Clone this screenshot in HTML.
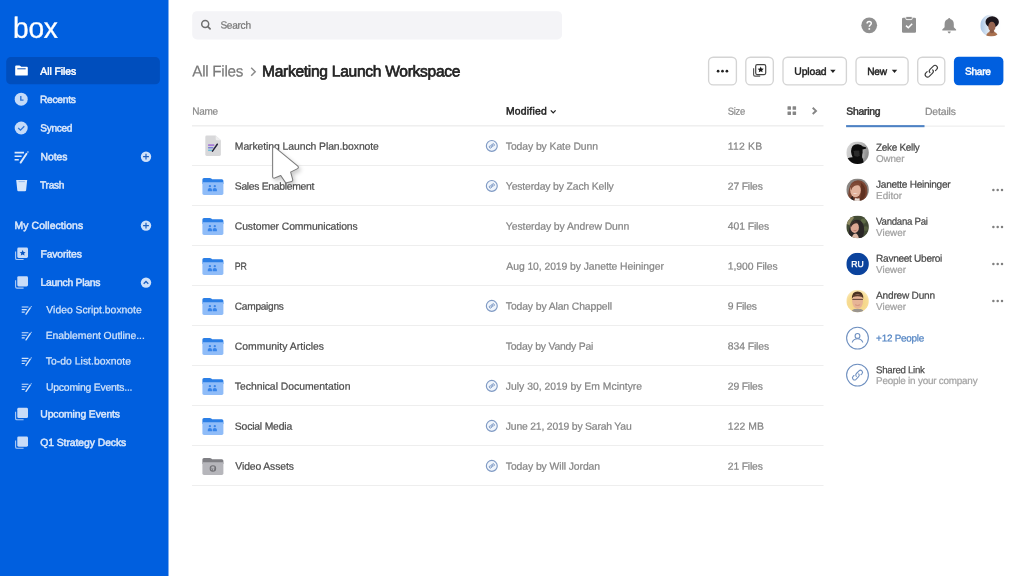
<!DOCTYPE html>
<html lang="en">
<head>
<meta charset="utf-8">
<title>Marketing Launch Workspace - Box</title>
<style>
*{box-sizing:border-box;margin:0;padding:0}
html,body{width:1024px;height:576px;overflow:hidden;background:#fff}
body{font-family:"Liberation Sans",Arial,sans-serif;position:relative;color:#4b4b4b;text-rendering:geometricPrecision}
#txt{position:absolute;left:0;top:0;width:1024px;height:576px;will-change:transform}
.t{position:absolute;white-space:nowrap;line-height:14px;transform-origin:0 50%}
.b{position:absolute}
svg{position:absolute;overflow:visible}
#gfx{left:0;top:0}
.av{width:23px;height:23px;border-radius:50%;overflow:hidden}
</style>
</head>
<body>
<svg id="gfx" width="1024" height="576" viewBox="0 0 1024 576">
<svg width="1024" height="576" viewBox="0 0 1024 576"><rect x="0" y="0" width="168.5" height="576" fill="#005fdf"/><rect x="6.2" y="57.1" width="153.7" height="27.2" rx="4.6" fill="#004ebd"/><rect x="192.2" y="11.2" width="369.8" height="28.2" rx="4.6" fill="#f4f4f7"/><rect x="708.6" y="57.2" width="27.8" height="27.7" rx="4.6" fill="#fff" stroke="#d4d4d4" stroke-width="1.35"/><rect x="745.8" y="57.2" width="27.5" height="27.7" rx="4.6" fill="#fff" stroke="#d4d4d4" stroke-width="1.35"/><rect x="783.0" y="57.2" width="63.4" height="27.7" rx="4.6" fill="#fff" stroke="#d4d4d4" stroke-width="1.35"/><rect x="856.0" y="57.2" width="52.1" height="27.7" rx="4.6" fill="#fff" stroke="#d4d4d4" stroke-width="1.35"/><rect x="917.7" y="57.2" width="27.1" height="27.7" rx="4.6" fill="#fff" stroke="#d4d4d4" stroke-width="1.35"/><rect x="953.9" y="56.7" width="49.5" height="28.6" rx="4.8" fill="#005fdf"/><rect x="192" y="125.3" width="631.5" height="1.1" fill="#e9e9e9"/><rect x="192" y="164.95" width="631.5" height="1.1" fill="#eeeeee"/><rect x="192" y="204.95" width="631.5" height="1.1" fill="#eeeeee"/><rect x="192" y="244.95" width="631.5" height="1.1" fill="#eeeeee"/><rect x="192" y="284.95" width="631.5" height="1.1" fill="#eeeeee"/><rect x="192" y="324.95" width="631.5" height="1.1" fill="#eeeeee"/><rect x="192" y="364.95" width="631.5" height="1.1" fill="#eeeeee"/><rect x="192" y="404.95" width="631.5" height="1.1" fill="#eeeeee"/><rect x="192" y="444.95" width="631.5" height="1.1" fill="#eeeeee"/><rect x="192" y="484.95" width="631.5" height="1.1" fill="#eeeeee"/><rect x="846" y="125.5" width="158.8" height="1.3" fill="#efefef"/><rect x="846.1" y="125.1" width="78.4" height="2.1" fill="#4e82c4"/></svg>
<svg x="15" y="65.6" overflow="visible" width="13" height="10" viewBox="0 0 13 10.3"><path d="M1 0 H4.4 Q5 0 5.4 .4 L6.2 1.2 H12 Q13 1.2 13 2.2 V9.3 Q13 10.3 12 10.3 H1 Q0 10.3 0 9.3 V1 Q0 0 1 0Z" fill="#fff"/><path d="M2.2 3.3 H10.8" stroke="#004ebd" stroke-width="1"/></svg>
<svg x="14.7" y="92.7" overflow="visible" width="13" height="13" viewBox="0 0 13 13"><circle cx="6.5" cy="6.5" r="6.5" fill="#c4dbf9"/><path d="M6.1 3.4 V7.4 H8.8" fill="none" stroke="#2f76d8" stroke-width="1.4"/></svg>
<svg x="14.7" y="121.5" overflow="visible" width="13" height="13" viewBox="0 0 13 13"><circle cx="6.5" cy="6.5" r="6.5" fill="#c4dbf9"/><path d="M3.5 6.6 L5.8 8.7 L9.6 4.8" fill="none" stroke="#2f76d8" stroke-width="1.3"/></svg>
<svg x="14.2" y="151.2" overflow="visible" width="15.0" height="12.0" viewBox="0 0 15 12"><path d="M.4 1.4 H9.8 M.4 5 H7.4 M.4 8.6 H4.6" stroke="#dce9fb" stroke-width="1.6" fill="none"/><path d="M6.4 11.4 L12.3 2.6" stroke="#dce9fb" stroke-width="1.9" stroke-linecap="round"/><circle cx="13.7" cy="0.8" r=".8" fill="#dce9fb"/></svg>
<svg x="16.2" y="180" overflow="visible" width="11" height="11.2" viewBox="0 0 11 11.2"><path d="M0 0 H11 L9.9 10.2 Q9.8 11.2 8.8 11.2 H2.2 Q1.2 11.2 1.1 10.2Z" fill="#d6e6fb"/><path d="M2.4 1.6 H8.6" stroke="#8db6ee" stroke-width=".9"/></svg>
<svg x="140.8" y="151.5" overflow="visible" width="10.4" height="10.4" viewBox="0 0 10.4 10.4"><circle cx="5.2" cy="5.2" r="5.2" fill="#cfe1fa"/><path d="M5.2 2.3 V8.1 M2.3 5.2 H8.1" stroke="#1c5fc0" stroke-width="1.2"/></svg>
<svg x="140.8" y="220.4" overflow="visible" width="10.4" height="10.4" viewBox="0 0 10.4 10.4"><circle cx="5.2" cy="5.2" r="5.2" fill="#cfe1fa"/><path d="M5.2 2.3 V8.1 M2.3 5.2 H8.1" stroke="#1c5fc0" stroke-width="1.2"/></svg>
<svg x="140.8" y="277.4" overflow="visible" width="10.4" height="10.4" viewBox="0 0 10.4 10.4"><circle cx="5.2" cy="5.2" r="5.2" fill="#cfe1fa"/><path d="M2.9 6.4 L5.2 4.1 L7.5 6.4" fill="none" stroke="#1c5fc0" stroke-width="1.3"/></svg>
<svg x="15.0" y="247.6" overflow="visible" width="13" height="12.5" viewBox="0 0 13 12.5"><path d="M.6 4 V10.6 Q.6 11.9 1.9 11.9 H8.6" fill="none" stroke="#c9dcf8" stroke-width="1.1" opacity=".85"/><rect x="2.3" y="0" width="10.7" height="10.3" rx="1.4" fill="#c9dcf8"/><path d="M7.65 2.4 L8.55 4.3 L10.6 4.55 L9.1 5.95 L9.5 8 L7.65 7 L5.8 8 L6.2 5.95 L4.7 4.55 L6.75 4.3Z" fill="#0a57c2"/></svg>
<svg x="15.0" y="276.2" overflow="visible" width="13" height="12.5" viewBox="0 0 13 12.5"><path d="M.6 4 V10.6 Q.6 11.9 1.9 11.9 H8.6" fill="none" stroke="#c9dcf8" stroke-width="1.1" opacity=".85"/><rect x="2.3" y="0" width="10.7" height="10.3" rx="1.4" fill="#c9dcf8"/></svg>
<svg x="21.4" y="306.0" overflow="visible" width="10.8" height="8.6" viewBox="0 0 15 12"><path d="M.4 1.4 H9.8 M.4 5 H7.4 M.4 8.6 H4.6" stroke="#d3e4fa" stroke-width="1.6" fill="none"/><path d="M6.4 11.4 L12.3 2.6" stroke="#d3e4fa" stroke-width="1.9" stroke-linecap="round"/><circle cx="13.7" cy="0.8" r=".8" fill="#d3e4fa"/></svg>
<svg x="21.4" y="331.7" overflow="visible" width="10.8" height="8.6" viewBox="0 0 15 12"><path d="M.4 1.4 H9.8 M.4 5 H7.4 M.4 8.6 H4.6" stroke="#d3e4fa" stroke-width="1.6" fill="none"/><path d="M6.4 11.4 L12.3 2.6" stroke="#d3e4fa" stroke-width="1.9" stroke-linecap="round"/><circle cx="13.7" cy="0.8" r=".8" fill="#d3e4fa"/></svg>
<svg x="21.4" y="357.3" overflow="visible" width="10.8" height="8.6" viewBox="0 0 15 12"><path d="M.4 1.4 H9.8 M.4 5 H7.4 M.4 8.6 H4.6" stroke="#d3e4fa" stroke-width="1.6" fill="none"/><path d="M6.4 11.4 L12.3 2.6" stroke="#d3e4fa" stroke-width="1.9" stroke-linecap="round"/><circle cx="13.7" cy="0.8" r=".8" fill="#d3e4fa"/></svg>
<svg x="21.4" y="383.2" overflow="visible" width="10.8" height="8.6" viewBox="0 0 15 12"><path d="M.4 1.4 H9.8 M.4 5 H7.4 M.4 8.6 H4.6" stroke="#d3e4fa" stroke-width="1.6" fill="none"/><path d="M6.4 11.4 L12.3 2.6" stroke="#d3e4fa" stroke-width="1.9" stroke-linecap="round"/><circle cx="13.7" cy="0.8" r=".8" fill="#d3e4fa"/></svg>
<svg x="15.0" y="407.8" overflow="visible" width="13" height="12.5" viewBox="0 0 13 12.5"><path d="M.6 4 V10.6 Q.6 11.9 1.9 11.9 H8.6" fill="none" stroke="#c9dcf8" stroke-width="1.1" opacity=".85"/><rect x="2.3" y="0" width="10.7" height="10.3" rx="1.4" fill="#c9dcf8"/></svg>
<svg x="15.0" y="436.4" overflow="visible" width="13" height="12.5" viewBox="0 0 13 12.5"><path d="M.6 4 V10.6 Q.6 11.9 1.9 11.9 H8.6" fill="none" stroke="#c9dcf8" stroke-width="1.1" opacity=".85"/><rect x="2.3" y="0" width="10.7" height="10.3" rx="1.4" fill="#c9dcf8"/></svg>
<svg x="200.8" y="19.6" overflow="visible" width="11" height="11" viewBox="0 0 11 11"><circle cx="4.4" cy="4.4" r="3.5" fill="none" stroke="#6f6f6f" stroke-width="1.5"/><path d="M7 7 L9.3 9.3" stroke="#6f6f6f" stroke-width="1.7" stroke-linecap="round"/></svg>
<svg x="861.2" y="17.3" overflow="visible" width="16" height="16" viewBox="0 0 16 16"><circle cx="8" cy="8" r="7.9" fill="#909090"/><path d="M5.9 6.3 Q5.9 4.2 8 4.2 Q10.1 4.2 10.1 6 Q10.1 7.1 9 7.8 Q8.1 8.4 8.1 9.4" fill="none" stroke="#fff" stroke-width="1.5"/><circle cx="8.1" cy="11.6" r=".95" fill="#fff"/></svg>
<svg x="902" y="16.4" overflow="visible" width="14" height="16.4" viewBox="0 0 14 16.4"><path d="M1.2 1.4 H12.8 Q14 1.4 14 2.6 V15.2 Q14 16.4 12.8 16.4 H1.2 Q0 16.4 0 15.2 V2.6 Q0 1.4 1.2 1.4Z" fill="#909090"/><rect x="3.8" y="0" width="6.4" height="3.2" rx="1" fill="#909090" stroke="#fff" stroke-width=".9"/><path d="M4 9.2 L6.3 11.4 L10.2 7.4" fill="none" stroke="#fff" stroke-width="1.5"/></svg>
<svg x="942" y="18" overflow="visible" width="14.4" height="15.6" viewBox="0 0 14.4 15.6"><path d="M7.2 0 Q8.2 0 8.3 1.1 Q11.8 2 11.8 6.2 V9.2 L14.1 11.6 Q14.6 12.6 13.6 12.6 H.8 Q-.2 12.6 .3 11.6 L2.6 9.2 V6.2 Q2.6 2 6.1 1.1 Q6.2 0 7.2 0Z" fill="#909090"/><path d="M5.6 13.6 H8.8 Q8.6 15.4 7.2 15.4 Q5.8 15.4 5.6 13.6Z" fill="#909090"/></svg>
<svg x="980.3" y="14.6" overflow="visible" width="21.8" height="21.8" viewBox="0 0 21.8 21.8"><defs><clipPath id="ca0"><circle cx="10.9" cy="10.9" r="10.9"/></clipPath><filter id="avb" x="-20%" y="-20%" width="140%" height="140%"><feGaussianBlur stdDeviation=".55"/></filter><linearGradient id="ga0" x1="0" x2="1" y1="0" y2="0"><stop offset="0" stop-color="#a9c6e6"/><stop offset=".3" stop-color="#d6e3f1"/><stop offset=".62" stop-color="#fbfbfc"/><stop offset="1" stop-color="#fff"/></linearGradient></defs><g clip-path="url(#ca0)"><rect width="21.8" height="21.8" fill="url(#ga0)"/><g filter="url(#avb)"><ellipse cx="11.9" cy="7.4" rx="6.7" ry="5.7" fill="#1d151c"/><path d="M5.6 21.8 Q6.6 17 11.6 17 Q16.6 17 17.8 21.8Z" fill="#a9714f"/><ellipse cx="11.6" cy="12" rx="3.6" ry="4.9" fill="#95644f"/><ellipse cx="11.6" cy="16.6" rx="2.2" ry="2" fill="#8a5a44"/></g></g></svg>
<svg x="250" y="66.9" overflow="visible" width="6.4" height="9.6" viewBox="0 0 6.4 9.6"><path d="M1.2 .8 L5.2 4.8 L1.2 8.8" fill="none" stroke="#8a8a8a" stroke-width="1.5"/></svg>
<svg x="714.5" y="67.2" overflow="visible" width="16" height="8" viewBox="0 0 16 8"><circle cx="3.5999999999999996" cy="4" r="1.35" fill="#222"/><circle cx="8" cy="4" r="1.35" fill="#222"/><circle cx="12.4" cy="4" r="1.35" fill="#222"/></svg>
<svg x="753" y="64.1" overflow="visible" width="13.4" height="13" viewBox="0 0 13.4 13"><path d="M.6 4.2 V10.6 Q.6 12 2 12 H7.2" fill="none" stroke="#555" stroke-width="1.15"/><rect x="2.7" y=".6" width="10" height="9.9" rx="1.5" fill="#fff" stroke="#444" stroke-width="1.2"/><path d="M7.7 2.5 L8.6 4.4 L10.7 4.65 L9.2 6.05 L9.6 8.1 L7.7 7.1 L5.8 8.1 L6.2 6.05 L4.7 4.65 L6.8 4.4Z" fill="#1c1c1c"/></svg>
<svg x="830.2" y="69.8" overflow="visible" width="5.4" height="3.2" viewBox="0 0 5.4 3.2"><path d="M0 0 H5.4 L2.7 3.2Z" fill="#222"/></svg>
<svg x="891.8" y="69.8" overflow="visible" width="5.4" height="3.2" viewBox="0 0 5.4 3.2"><path d="M0 0 H5.4 L2.7 3.2Z" fill="#222"/></svg>
<svg x="922.5" y="62.4" overflow="visible" width="17.6" height="17.6" viewBox="0 0 14 14"><g fill="none" stroke="#3a3a3a" stroke-width=".9" stroke-linecap="round"><path d="M5.9 8.1 Q4.7 6.8 6 5.5 L8.6 2.9 Q10 1.6 11.3 2.9 Q12.6 4.2 11.3 5.6 L10.3 6.6"/><path d="M8.1 5.9 Q9.3 7.2 8 8.5 L5.4 11.1 Q4 12.4 2.7 11.1 Q1.4 9.8 2.7 8.4 L3.7 7.4"/></g></svg>
<svg x="550.2" y="109.6" overflow="visible" width="6" height="4.4" viewBox="0 0 6 4.4"><path d="M.6 .8 L3 3.3 L5.4 .8" fill="none" stroke="#222" stroke-width="1.3"/></svg>
<svg x="787.5" y="106.3" overflow="visible" width="8.6" height="8.6" viewBox="0 0 8.6 8.6"><g fill="#868686"><rect x="0" y="0" width="3.5" height="3.5" rx=".4"/><rect x="5.1" y="0" width="3.5" height="3.5" rx=".4"/><rect x="0" y="5.1" width="3.5" height="3.5" rx=".4"/><rect x="5.1" y="5.1" width="3.5" height="3.5" rx=".4"/></g></svg>
<svg x="811.6" y="106.9" overflow="visible" width="5.6" height="8" viewBox="0 0 5.6 8"><path d="M1.1 .9 L4.4 4 L1.1 7.1" fill="none" stroke="#858585" stroke-width="1.9"/></svg>
<svg x="205.3" y="135.6" overflow="visible" width="15.6" height="20.4" viewBox="0 0 15.6 20.4"><path d="M1.4 0 H10.4 L15.6 4.6 V19 Q15.6 20.4 14.2 20.4 H1.4 Q0 20.4 0 19 V1.4 Q0 0 1.4 0Z" fill="#d8d8da"/><path d="M10.4 0 L15.6 4.6 H11.6 Q10.4 4.6 10.4 3.4Z" fill="#eeeeef"/><path d="M2.8 9.5 H9" stroke="#a06dd6" stroke-width="1.5"/><path d="M2.8 12.1 H8" stroke="#7a80d8" stroke-width="1.5"/><path d="M2.8 14.7 H6.7" stroke="#69bfdc" stroke-width="1.5"/><path d="M7.2 15.5 L12 8.6" stroke="#23233a" stroke-width="1.5" stroke-linecap="round"/></svg>
<svg x="485.7" y="139.8" overflow="visible" width="12.2" height="12.2" viewBox="0 0 12.2 12.2"><circle cx="6.1" cy="6.1" r="5.45" fill="#f0f5fc" stroke="#7f9ac4" stroke-width="1.15"/><g fill="none" stroke="#6f8dbd" stroke-width=".95" stroke-linecap="round"><path d="M5.5 7 Q4.8 6.2 5.6 5.4 L6.7 4.3 Q7.5 3.5 8.3 4.3 Q9.1 5.1 8.3 5.9 L7.9 6.3"/><path d="M6.7 5.2 Q7.4 6 6.6 6.8 L5.5 7.9 Q4.7 8.7 3.9 7.9 Q3.1 7.1 3.9 6.3 L4.3 5.9"/></g></svg>
<svg x="202.4" y="177.9" overflow="visible" width="21" height="17" viewBox="0 0 21 17"><path d="M1.6 0 H7.4 Q8.3 0 8.9 .6 L9.7 1.3 H19.4 Q21 1.3 21 2.9 V6 H0 V1.6 Q0 0 1.6 0Z" fill="#2b7fe6"/><path d="M0 4.3 H21 V15.4 Q21 17 19.4 17 H1.6 Q0 17 0 15.4Z" fill="#8fbcf8"/><circle cx="7.5" cy="8.3" r="1.15" fill="#3684ea"/><path d="M5.4 13.4 V11.9 Q5.4 10.2 7.5 10.2 Q9.6 10.2 9.6 11.9 V13.4Z" fill="#3684ea"/><circle cx="12.4" cy="8.3" r="1.15" fill="#3684ea"/><path d="M10.3 13.4 V11.9 Q10.3 10.2 12.4 10.2 Q14.5 10.2 14.5 11.9 V13.4Z" fill="#3684ea"/></svg>
<svg x="485.7" y="179.8" overflow="visible" width="12.2" height="12.2" viewBox="0 0 12.2 12.2"><circle cx="6.1" cy="6.1" r="5.45" fill="#f0f5fc" stroke="#7f9ac4" stroke-width="1.15"/><g fill="none" stroke="#6f8dbd" stroke-width=".95" stroke-linecap="round"><path d="M5.5 7 Q4.8 6.2 5.6 5.4 L6.7 4.3 Q7.5 3.5 8.3 4.3 Q9.1 5.1 8.3 5.9 L7.9 6.3"/><path d="M6.7 5.2 Q7.4 6 6.6 6.8 L5.5 7.9 Q4.7 8.7 3.9 7.9 Q3.1 7.1 3.9 6.3 L4.3 5.9"/></g></svg>
<svg x="202.4" y="217.9" overflow="visible" width="21" height="17" viewBox="0 0 21 17"><path d="M1.6 0 H7.4 Q8.3 0 8.9 .6 L9.7 1.3 H19.4 Q21 1.3 21 2.9 V6 H0 V1.6 Q0 0 1.6 0Z" fill="#2b7fe6"/><path d="M0 4.3 H21 V15.4 Q21 17 19.4 17 H1.6 Q0 17 0 15.4Z" fill="#8fbcf8"/><circle cx="7.5" cy="8.3" r="1.15" fill="#3684ea"/><path d="M5.4 13.4 V11.9 Q5.4 10.2 7.5 10.2 Q9.6 10.2 9.6 11.9 V13.4Z" fill="#3684ea"/><circle cx="12.4" cy="8.3" r="1.15" fill="#3684ea"/><path d="M10.3 13.4 V11.9 Q10.3 10.2 12.4 10.2 Q14.5 10.2 14.5 11.9 V13.4Z" fill="#3684ea"/></svg>
<svg x="202.4" y="257.9" overflow="visible" width="21" height="17" viewBox="0 0 21 17"><path d="M1.6 0 H7.4 Q8.3 0 8.9 .6 L9.7 1.3 H19.4 Q21 1.3 21 2.9 V6 H0 V1.6 Q0 0 1.6 0Z" fill="#2b7fe6"/><path d="M0 4.3 H21 V15.4 Q21 17 19.4 17 H1.6 Q0 17 0 15.4Z" fill="#8fbcf8"/><circle cx="7.5" cy="8.3" r="1.15" fill="#3684ea"/><path d="M5.4 13.4 V11.9 Q5.4 10.2 7.5 10.2 Q9.6 10.2 9.6 11.9 V13.4Z" fill="#3684ea"/><circle cx="12.4" cy="8.3" r="1.15" fill="#3684ea"/><path d="M10.3 13.4 V11.9 Q10.3 10.2 12.4 10.2 Q14.5 10.2 14.5 11.9 V13.4Z" fill="#3684ea"/></svg>
<svg x="202.4" y="297.9" overflow="visible" width="21" height="17" viewBox="0 0 21 17"><path d="M1.6 0 H7.4 Q8.3 0 8.9 .6 L9.7 1.3 H19.4 Q21 1.3 21 2.9 V6 H0 V1.6 Q0 0 1.6 0Z" fill="#2b7fe6"/><path d="M0 4.3 H21 V15.4 Q21 17 19.4 17 H1.6 Q0 17 0 15.4Z" fill="#8fbcf8"/><circle cx="7.5" cy="8.3" r="1.15" fill="#3684ea"/><path d="M5.4 13.4 V11.9 Q5.4 10.2 7.5 10.2 Q9.6 10.2 9.6 11.9 V13.4Z" fill="#3684ea"/><circle cx="12.4" cy="8.3" r="1.15" fill="#3684ea"/><path d="M10.3 13.4 V11.9 Q10.3 10.2 12.4 10.2 Q14.5 10.2 14.5 11.9 V13.4Z" fill="#3684ea"/></svg>
<svg x="485.7" y="299.8" overflow="visible" width="12.2" height="12.2" viewBox="0 0 12.2 12.2"><circle cx="6.1" cy="6.1" r="5.45" fill="#f0f5fc" stroke="#7f9ac4" stroke-width="1.15"/><g fill="none" stroke="#6f8dbd" stroke-width=".95" stroke-linecap="round"><path d="M5.5 7 Q4.8 6.2 5.6 5.4 L6.7 4.3 Q7.5 3.5 8.3 4.3 Q9.1 5.1 8.3 5.9 L7.9 6.3"/><path d="M6.7 5.2 Q7.4 6 6.6 6.8 L5.5 7.9 Q4.7 8.7 3.9 7.9 Q3.1 7.1 3.9 6.3 L4.3 5.9"/></g></svg>
<svg x="202.4" y="337.9" overflow="visible" width="21" height="17" viewBox="0 0 21 17"><path d="M1.6 0 H7.4 Q8.3 0 8.9 .6 L9.7 1.3 H19.4 Q21 1.3 21 2.9 V6 H0 V1.6 Q0 0 1.6 0Z" fill="#2b7fe6"/><path d="M0 4.3 H21 V15.4 Q21 17 19.4 17 H1.6 Q0 17 0 15.4Z" fill="#8fbcf8"/><circle cx="7.5" cy="8.3" r="1.15" fill="#3684ea"/><path d="M5.4 13.4 V11.9 Q5.4 10.2 7.5 10.2 Q9.6 10.2 9.6 11.9 V13.4Z" fill="#3684ea"/><circle cx="12.4" cy="8.3" r="1.15" fill="#3684ea"/><path d="M10.3 13.4 V11.9 Q10.3 10.2 12.4 10.2 Q14.5 10.2 14.5 11.9 V13.4Z" fill="#3684ea"/></svg>
<svg x="202.4" y="377.9" overflow="visible" width="21" height="17" viewBox="0 0 21 17"><path d="M1.6 0 H7.4 Q8.3 0 8.9 .6 L9.7 1.3 H19.4 Q21 1.3 21 2.9 V6 H0 V1.6 Q0 0 1.6 0Z" fill="#2b7fe6"/><path d="M0 4.3 H21 V15.4 Q21 17 19.4 17 H1.6 Q0 17 0 15.4Z" fill="#8fbcf8"/><circle cx="7.5" cy="8.3" r="1.15" fill="#3684ea"/><path d="M5.4 13.4 V11.9 Q5.4 10.2 7.5 10.2 Q9.6 10.2 9.6 11.9 V13.4Z" fill="#3684ea"/><circle cx="12.4" cy="8.3" r="1.15" fill="#3684ea"/><path d="M10.3 13.4 V11.9 Q10.3 10.2 12.4 10.2 Q14.5 10.2 14.5 11.9 V13.4Z" fill="#3684ea"/></svg>
<svg x="485.7" y="379.8" overflow="visible" width="12.2" height="12.2" viewBox="0 0 12.2 12.2"><circle cx="6.1" cy="6.1" r="5.45" fill="#f0f5fc" stroke="#7f9ac4" stroke-width="1.15"/><g fill="none" stroke="#6f8dbd" stroke-width=".95" stroke-linecap="round"><path d="M5.5 7 Q4.8 6.2 5.6 5.4 L6.7 4.3 Q7.5 3.5 8.3 4.3 Q9.1 5.1 8.3 5.9 L7.9 6.3"/><path d="M6.7 5.2 Q7.4 6 6.6 6.8 L5.5 7.9 Q4.7 8.7 3.9 7.9 Q3.1 7.1 3.9 6.3 L4.3 5.9"/></g></svg>
<svg x="202.4" y="417.9" overflow="visible" width="21" height="17" viewBox="0 0 21 17"><path d="M1.6 0 H7.4 Q8.3 0 8.9 .6 L9.7 1.3 H19.4 Q21 1.3 21 2.9 V6 H0 V1.6 Q0 0 1.6 0Z" fill="#2b7fe6"/><path d="M0 4.3 H21 V15.4 Q21 17 19.4 17 H1.6 Q0 17 0 15.4Z" fill="#8fbcf8"/><circle cx="7.5" cy="8.3" r="1.15" fill="#3684ea"/><path d="M5.4 13.4 V11.9 Q5.4 10.2 7.5 10.2 Q9.6 10.2 9.6 11.9 V13.4Z" fill="#3684ea"/><circle cx="12.4" cy="8.3" r="1.15" fill="#3684ea"/><path d="M10.3 13.4 V11.9 Q10.3 10.2 12.4 10.2 Q14.5 10.2 14.5 11.9 V13.4Z" fill="#3684ea"/></svg>
<svg x="485.7" y="419.8" overflow="visible" width="12.2" height="12.2" viewBox="0 0 12.2 12.2"><circle cx="6.1" cy="6.1" r="5.45" fill="#f0f5fc" stroke="#7f9ac4" stroke-width="1.15"/><g fill="none" stroke="#6f8dbd" stroke-width=".95" stroke-linecap="round"><path d="M5.5 7 Q4.8 6.2 5.6 5.4 L6.7 4.3 Q7.5 3.5 8.3 4.3 Q9.1 5.1 8.3 5.9 L7.9 6.3"/><path d="M6.7 5.2 Q7.4 6 6.6 6.8 L5.5 7.9 Q4.7 8.7 3.9 7.9 Q3.1 7.1 3.9 6.3 L4.3 5.9"/></g></svg>
<svg x="202.4" y="457.9" overflow="visible" width="21" height="17" viewBox="0 0 21 17"><path d="M1.6 0 H7.4 Q8.3 0 8.9 .6 L9.7 1.3 H19.4 Q21 1.3 21 2.9 V6 H0 V1.6 Q0 0 1.6 0Z" fill="#7f7f84"/><path d="M0 4.3 H21 V15.4 Q21 17 19.4 17 H1.6 Q0 17 0 15.4Z" fill="#b6b6bb"/><circle cx="10.5" cy="10.6" r="2.7" fill="none" stroke="#6f6f74" stroke-width="1.1"/><path d="M8.6 9.6 Q10.5 10.6 10 13 M12.4 9.4 Q11.2 11 12.6 12.2" fill="none" stroke="#6f6f74" stroke-width=".9"/></svg>
<svg x="485.7" y="459.8" overflow="visible" width="12.2" height="12.2" viewBox="0 0 12.2 12.2"><circle cx="6.1" cy="6.1" r="5.45" fill="#f0f5fc" stroke="#7f9ac4" stroke-width="1.15"/><g fill="none" stroke="#6f8dbd" stroke-width=".95" stroke-linecap="round"><path d="M5.5 7 Q4.8 6.2 5.6 5.4 L6.7 4.3 Q7.5 3.5 8.3 4.3 Q9.1 5.1 8.3 5.9 L7.9 6.3"/><path d="M6.7 5.2 Q7.4 6 6.6 6.8 L5.5 7.9 Q4.7 8.7 3.9 7.9 Q3.1 7.1 3.9 6.3 L4.3 5.9"/></g></svg>
<svg x="846.3" y="141.4" overflow="visible" width="22.6" height="22.6" viewBox="0 0 22.6 22.6"><defs><clipPath id="ca1"><circle cx="11.3" cy="11.3" r="11.3"/></clipPath><linearGradient id="gz" x1="0" x2="1" y1="0" y2=".4"><stop offset="0" stop-color="#d9d9d9"/><stop offset=".5" stop-color="#c4c4c4"/><stop offset="1" stop-color="#8e8e8e"/></linearGradient></defs><g clip-path="url(#ca1)"><rect width="22.6" height="22.6" fill="url(#gz)"/><g filter="url(#avb)"><path d="M0 22.6 V17.6 Q3 15.6 6.4 15.8 Q4 11 5.2 7 Q6.6 2.6 11.6 2.8 Q15 3 16.6 5.2 L19.6 5.8 Q20.6 6.8 19.4 7.4 L16.2 8 Q17 11 16 13.4 Q15.4 15.6 16.6 17.4 L17.6 22.6Z" fill="#0b0b0b"/><path d="M16.4 9 Q18.6 12 18.2 16 L16.4 17 Q15.6 15.4 16.2 13.4 Q16.8 11 16.4 9Z" fill="#a8a8a8"/><path d="M7.4 9.6 Q10 8.6 13 9.4 L13.4 14.6 Q10.6 16 8 14.4Z" fill="#2c2c2c"/></g></g></svg>
<svg x="846.3" y="178.5" overflow="visible" width="22.6" height="22.6" viewBox="0 0 22.6 22.6"><defs><clipPath id="ca2"><circle cx="11.3" cy="11.3" r="11.3"/></clipPath></defs><g clip-path="url(#ca2)"><rect width="22.6" height="22.6" fill="#8a8683"/><g filter="url(#avb)"><path d="M2.2 22.6 Q1 10 5.4 4.4 Q9.6 .4 15.6 2.6 Q21.6 6 21 14 Q20.6 19 17.6 22.6Z" fill="#7a4432"/><path d="M14.4 4 Q20 8 19 16 Q18 20.6 15 22.6 L13 22.6 Q16 14 14.4 4Z" fill="#5e3020"/><ellipse cx="9.2" cy="11.8" rx="5.3" ry="6.9" fill="#e3b49e"/><path d="M4.4 8.4 Q6 4 11 4.2 Q14.4 4.6 15.2 8 Q11.4 5.6 8 7.4 Q5.6 8.8 4.8 12Z" fill="#804a36"/><path d="M6.6 14.4 Q9 16.4 12 14.2 Q9.4 15.2 6.6 14.4Z" fill="#fff"/><path d="M3.4 22.6 Q4 18.4 6.4 17.4 L8 22.6Z" fill="#2f2320"/><path d="M8 22.6 L9 19.6 Q11 20.6 13 19.4 L13.6 22.6Z" fill="#e9ddd6"/></g></g></svg>
<svg x="846.3" y="215.6" overflow="visible" width="22.6" height="22.6" viewBox="0 0 22.6 22.6"><defs><clipPath id="ca3"><circle cx="11.3" cy="11.3" r="11.3"/></clipPath></defs><g clip-path="url(#ca3)"><rect width="22.6" height="22.6" fill="#434b35"/><g filter="url(#avb)"><path d="M0 3 Q3 0 8 2 Q5 5 3 10 Q1.6 8 0 9Z" fill="#8f8a63"/><circle cx="17" cy="5.4" r="2.6" fill="#5d6945"/><circle cx="19.4" cy="13" r="2.4" fill="#56603f"/><path d="M3 22.6 Q1.6 12 5.6 6.4 Q9.6 2.6 14.6 5.4 Q18.6 9 17.6 17 Q17.4 20.6 15.6 22.6Z" fill="#2b2527"/><ellipse cx="8.4" cy="11.8" rx="4.2" ry="5.6" fill="#dba793"/><path d="M4.2 9 Q5.6 5.4 9.6 5.6 Q12.4 6 13 8.6 Q10 7 7.4 8.4 Q5.4 9.4 4.6 12Z" fill="#3a2e2a"/><path d="M5.6 22.6 Q6 18.6 9 17.8 Q11.6 18 12.6 22.6Z" fill="#dcb7a4"/><path d="M6.2 14.4 Q8.4 16 11 14.2 Q8.8 15 6.2 14.4Z" fill="#a4524a"/></g></g></svg>
<svg x="846.3" y="252.7" overflow="visible" width="22.6" height="22.6" viewBox="0 0 22.6 22.6"><defs><clipPath id="ca4"><circle cx="11.3" cy="11.3" r="11.3"/></clipPath></defs><g clip-path="url(#ca4)"><rect width="22.6" height="22.6" fill="#0b439d"/></g></svg>
<svg x="846.3" y="289.8" overflow="visible" width="22.6" height="22.6" viewBox="0 0 22.6 22.6"><defs><clipPath id="ca5"><circle cx="11.3" cy="11.3" r="11.3"/></clipPath><radialGradient id="gd" cx=".5" cy=".6" r=".6"><stop offset="0" stop-color="#f3cf7c"/><stop offset=".75" stop-color="#f7dc93"/><stop offset="1" stop-color="#fbecc0"/></radialGradient></defs><g clip-path="url(#ca5)"><rect width="22.6" height="22.6" fill="url(#gd)"/><g filter="url(#avb)"><path d="M5.6 9 Q5.4 1.6 11.3 1.6 Q17.2 1.6 17 9 Q15.6 5.6 11.3 5.6 Q7 5.6 5.6 9Z" fill="#4a3324"/><ellipse cx="11.3" cy="11.8" rx="5.4" ry="7.4" fill="#e7b496"/><path d="M6 9.6 H16.6" stroke="#6a4a3c" stroke-width="1.1"/><path d="M7 5.4 Q11.3 3.8 15.6 5.4 L16 7.2 Q11.3 5.6 6.6 7.2Z" fill="#5a3d2c"/><path d="M8.8 15 Q11.3 16.4 13.8 15" stroke="#cf8d78" stroke-width=".9" fill="none"/><path d="M5 22.6 Q5.6 19.6 8 19.2 L14.6 19.2 Q17 19.6 17.6 22.6Z" fill="#9a958f"/></g></g></svg>
<svg x="989.7" y="186.0" overflow="visible" width="16" height="8" viewBox="0 0 16 8"><circle cx="3.7" cy="4" r="1.25" fill="#808080"/><circle cx="8" cy="4" r="1.25" fill="#808080"/><circle cx="12.3" cy="4" r="1.25" fill="#808080"/></svg>
<svg x="989.7" y="223.0" overflow="visible" width="16" height="8" viewBox="0 0 16 8"><circle cx="3.7" cy="4" r="1.25" fill="#808080"/><circle cx="8" cy="4" r="1.25" fill="#808080"/><circle cx="12.3" cy="4" r="1.25" fill="#808080"/></svg>
<svg x="989.7" y="260.0" overflow="visible" width="16" height="8" viewBox="0 0 16 8"><circle cx="3.7" cy="4" r="1.25" fill="#808080"/><circle cx="8" cy="4" r="1.25" fill="#808080"/><circle cx="12.3" cy="4" r="1.25" fill="#808080"/></svg>
<svg x="989.7" y="297.0" overflow="visible" width="16" height="8" viewBox="0 0 16 8"><circle cx="3.7" cy="4" r="1.25" fill="#808080"/><circle cx="8" cy="4" r="1.25" fill="#808080"/><circle cx="12.3" cy="4" r="1.25" fill="#808080"/></svg>
<svg x="846.1" y="326.7" overflow="visible" width="22.8" height="22.8" viewBox="0 0 22.8 22.8"><circle cx="11.4" cy="11.4" r="10.9" fill="#fff" stroke="#6f90c0" stroke-width="1.1"/><circle cx="11.4" cy="9.2" r="2.4" fill="none" stroke="#6f90c0" stroke-width="1.1"/><path d="M6.2 15.4 Q7.6 12 11.4 12 Q15.2 12 16.6 15.4" fill="none" stroke="#6f90c0" stroke-width="1.1" stroke-linecap="round"/></svg>
<svg x="846.1" y="363.7" overflow="visible" width="22.8" height="22.8" viewBox="0 0 22.8 22.8"><circle cx="11.4" cy="11.4" r="10.9" fill="#fff" stroke="#6f90c0" stroke-width="1.1"/><g fill="none" stroke="#6f90c0" stroke-width="1.1" stroke-linecap="round"><path d="M10.2 12.6 Q8.9 11.2 10.3 9.8 L12.9 7.2 Q14.4 5.8 15.8 7.2 Q17.2 8.6 15.8 10.1 L14.9 11"/><path d="M12.6 10.2 Q13.9 11.6 12.5 13 L9.9 15.6 Q8.4 17 7 15.6 Q5.6 14.2 7 12.7 L7.9 11.8"/></g></svg>
</svg>
<div id="txt">
<div class="t" id="t0" style="left:13px;top:11px;font-size:29.0px;color:#ffffff;letter-spacing:-0.300px;line-height:34px;-webkit-text-stroke:0.3px;transform:translate(0.10px,0.66px) rotate(.05deg) scaleX(0.9704)">box</div>
<div class="t" id="t1" style="left:40px;top:65px;font-size:10.4px;color:#ffffff;letter-spacing:-0.047px;-webkit-text-stroke:0.47px;transform:translate(0.30px,0.84px) rotate(.05deg)">All Files</div>
<div class="t" id="t2" style="left:39px;top:94px;font-size:10.4px;color:#dce9fb;letter-spacing:-0.300px;-webkit-text-stroke:0.47px;transform:translate(0.98px,0.02px) rotate(.05deg) scaleX(0.9883)">Recents</div>
<div class="t" id="t3" style="left:40px;top:122px;font-size:10.4px;color:#dce9fb;letter-spacing:-0.300px;-webkit-text-stroke:0.47px;transform:translate(0.20px,0.59px) rotate(.05deg) scaleX(0.9737)">Synced</div>
<div class="t" id="t4" style="left:40px;top:151px;font-size:10.4px;color:#dce9fb;letter-spacing:-0.039px;-webkit-text-stroke:0.47px;transform:translate(0.50px,0.24px) rotate(.05deg)">Notes</div>
<div class="t" id="t5" style="left:40px;top:179px;font-size:10.4px;color:#dce9fb;letter-spacing:-0.300px;-webkit-text-stroke:0.47px;transform:translate(0.10px,0.59px) rotate(.05deg) scaleX(0.9725)">Trash</div>
<div class="t" id="t6" style="left:14px;top:219px;font-size:10.4px;color:#dce9fb;letter-spacing:0.072px;-webkit-text-stroke:0.47px;transform:translate(0.60px,0.88px) rotate(.05deg)">My Collections</div>
<div class="t" id="t7" style="left:40px;top:248px;font-size:10.4px;color:#dce9fb;letter-spacing:-0.167px;-webkit-text-stroke:0.47px;transform:translate(0.50px,0.40px) rotate(.05deg)">Favorites</div>
<div class="t" id="t8" style="left:40px;top:276px;font-size:10.4px;color:#dce9fb;letter-spacing:-0.279px;-webkit-text-stroke:0.47px;transform:translate(0.50px,0.87px) rotate(.05deg)">Launch Plans</div>
<div class="t" id="t9" style="left:46px;top:304px;font-size:10.4px;color:#d3e4fa;letter-spacing:-0.017px;-webkit-text-stroke:0.22px;transform:translate(0.36px,0.17px) rotate(.05deg)">Video Script.boxnote</div>
<div class="t" id="t10" style="left:45px;top:329px;font-size:10.4px;color:#d3e4fa;letter-spacing:-0.035px;-webkit-text-stroke:0.22px;transform:translate(0.64px,0.97px) rotate(.05deg)">Enablement Outline...</div>
<div class="t" id="t11" style="left:45px;top:355px;font-size:10.4px;color:#d3e4fa;letter-spacing:0.016px;-webkit-text-stroke:0.22px;transform:translate(0.80px,0.56px) rotate(.05deg)">To-do List.boxnote</div>
<div class="t" id="t12" style="left:46px;top:381px;font-size:10.4px;color:#d3e4fa;letter-spacing:-0.211px;-webkit-text-stroke:0.22px;transform:translate(0.00px,0.62px) rotate(.05deg)">Upcoming Events...</div>
<div class="t" id="t13" style="left:40px;top:408px;font-size:10.4px;color:#dce9fb;letter-spacing:-0.124px;-webkit-text-stroke:0.47px;transform:translate(0.30px,0.44px) rotate(.05deg)">Upcoming Events</div>
<div class="t" id="t14" style="left:40px;top:437px;font-size:10.4px;color:#dce9fb;letter-spacing:-0.069px;-webkit-text-stroke:0.47px;transform:translate(0.20px,0.03px) rotate(.05deg)">Q1 Strategy Decks</div>
<div class="t" id="t15" style="left:220px;top:19px;font-size:10.4px;color:#767676;letter-spacing:-0.300px;-webkit-text-stroke:0.22px;transform:translate(0.40px,0.62px) rotate(.05deg) scaleX(0.9740)">Search</div>
<div class="t" id="t16" style="left:192px;top:62px;font-size:15.6px;color:#7a7a7a;letter-spacing:-0.300px;line-height:20px;-webkit-text-stroke:0.22px;transform:translate(0.30px,0.40px) rotate(.05deg) scaleX(0.9771)">All Files</div>
<div class="t" id="t17" style="left:261px;top:62px;font-size:15.6px;color:#222222;letter-spacing:-0.300px;line-height:20px;-webkit-text-stroke:0.66px;transform:translate(0.98px,0.43px) rotate(.05deg)">Marketing Launch Workspace</div>
<div class="t" id="t18" style="left:794px;top:65px;font-size:10.4px;color:#222222;letter-spacing:-0.127px;-webkit-text-stroke:0.47px;transform:translate(0.30px,0.87px) rotate(.05deg)">Upload</div>
<div class="t" id="t19" style="left:867px;top:65px;font-size:10.4px;color:#222222;letter-spacing:-0.300px;-webkit-text-stroke:0.47px;transform:translate(0.30px,0.88px) rotate(.05deg) scaleX(0.9734)">New</div>
<div class="t" id="t20" style="left:964px;top:65px;font-size:10.4px;color:#ffffff;letter-spacing:-0.300px;-webkit-text-stroke:0.47px;transform:translate(0.98px,0.87px) rotate(.05deg) scaleX(0.9799)">Share</div>
<div class="t" id="t21" style="left:192px;top:105px;font-size:10.4px;color:#8a8a8a;letter-spacing:-0.300px;-webkit-text-stroke:0.22px;transform:translate(0.20px,0.66px) rotate(.05deg) scaleX(0.9620)">Name</div>
<div class="t" id="t22" style="left:505px;top:105px;font-size:10.4px;color:#222222;letter-spacing:0.217px;-webkit-text-stroke:0.47px;transform:translate(0.90px,0.59px) rotate(.05deg)">Modified</div>
<div class="t" id="t23" style="left:727px;top:105px;font-size:10.4px;color:#8a8a8a;letter-spacing:-0.300px;-webkit-text-stroke:0.22px;transform:translate(0.80px,0.65px) rotate(.05deg) scaleX(0.9059)">Size</div>
<div class="t" id="t24" style="left:234px;top:140px;font-size:10.4px;color:#4b4b4b;letter-spacing:-0.073px;-webkit-text-stroke:0.22px;transform:translate(0.80px,0.63px) rotate(.05deg)">Marketing Launch Plan.boxnote</div>
<div class="t" id="t25" style="left:505px;top:140px;font-size:10.4px;color:#858585;letter-spacing:-0.081px;-webkit-text-stroke:0.22px;transform:translate(0.80px,0.63px) rotate(.05deg)">Today by Kate Dunn</div>
<div class="t" id="t26" style="left:727px;top:140px;font-size:10.4px;color:#858585;letter-spacing:0.190px;-webkit-text-stroke:0.22px;transform:translate(0.80px,0.63px) rotate(.05deg)">112 KB</div>
<div class="t" id="t27" style="left:234px;top:180px;font-size:10.4px;color:#4b4b4b;letter-spacing:-0.300px;-webkit-text-stroke:0.22px;transform:translate(0.80px,0.62px) rotate(.05deg) scaleX(0.9957)">Sales Enablement</div>
<div class="t" id="t28" style="left:505px;top:180px;font-size:10.4px;color:#858585;letter-spacing:-0.141px;-webkit-text-stroke:0.22px;transform:translate(0.80px,0.62px) rotate(.05deg)">Yesterday by Zach Kelly</div>
<div class="t" id="t29" style="left:727px;top:180px;font-size:10.4px;color:#858585;letter-spacing:-0.184px;-webkit-text-stroke:0.22px;transform:translate(0.80px,0.63px) rotate(.05deg)">27 Files</div>
<div class="t" id="t30" style="left:234px;top:220px;font-size:10.4px;color:#4b4b4b;letter-spacing:-0.110px;-webkit-text-stroke:0.22px;transform:translate(0.80px,0.62px) rotate(.05deg)">Customer Communications</div>
<div class="t" id="t31" style="left:505px;top:220px;font-size:10.4px;color:#858585;letter-spacing:-0.064px;-webkit-text-stroke:0.22px;transform:translate(0.80px,0.63px) rotate(.05deg)">Yesterday by Andrew Dunn</div>
<div class="t" id="t32" style="left:727px;top:220px;font-size:10.4px;color:#858585;letter-spacing:-0.096px;-webkit-text-stroke:0.22px;transform:translate(0.80px,0.62px) rotate(.05deg)">401 Files</div>
<div class="t" id="t33" style="left:234px;top:260px;font-size:10.4px;color:#4b4b4b;letter-spacing:-0.300px;-webkit-text-stroke:0.22px;transform:translate(0.80px,0.63px) rotate(.05deg) scaleX(0.8488)">PR</div>
<div class="t" id="t34" style="left:506px;top:260px;font-size:10.4px;color:#858585;letter-spacing:-0.079px;-webkit-text-stroke:0.22px;transform:translate(0.36px,0.63px) rotate(.05deg)">Aug 10, 2019 by Janette Heininger</div>
<div class="t" id="t35" style="left:727px;top:260px;font-size:10.4px;color:#858585;letter-spacing:-0.093px;-webkit-text-stroke:0.22px;transform:translate(0.80px,0.62px) rotate(.05deg)">1,900 Files</div>
<div class="t" id="t36" style="left:234px;top:300px;font-size:10.4px;color:#4b4b4b;letter-spacing:-0.300px;-webkit-text-stroke:0.22px;transform:translate(0.80px,0.63px) rotate(.05deg) scaleX(0.9788)">Campaigns</div>
<div class="t" id="t37" style="left:505px;top:300px;font-size:10.4px;color:#858585;letter-spacing:-0.115px;-webkit-text-stroke:0.22px;transform:translate(0.80px,0.62px) rotate(.05deg)">Today by Alan Chappell</div>
<div class="t" id="t38" style="left:727px;top:300px;font-size:10.4px;color:#858585;letter-spacing:-0.252px;-webkit-text-stroke:0.22px;transform:translate(0.80px,0.62px) rotate(.05deg)">9 Files</div>
<div class="t" id="t39" style="left:234px;top:340px;font-size:10.4px;color:#4b4b4b;letter-spacing:0.016px;-webkit-text-stroke:0.22px;transform:translate(0.80px,0.63px) rotate(.05deg)">Community Articles</div>
<div class="t" id="t40" style="left:505px;top:340px;font-size:10.4px;color:#858585;letter-spacing:-0.205px;-webkit-text-stroke:0.22px;transform:translate(0.80px,0.63px) rotate(.05deg)">Today by Vandy Pai</div>
<div class="t" id="t41" style="left:727px;top:340px;font-size:10.4px;color:#858585;letter-spacing:-0.096px;-webkit-text-stroke:0.22px;transform:translate(0.80px,0.62px) rotate(.05deg)">834 Files</div>
<div class="t" id="t42" style="left:234px;top:380px;font-size:10.4px;color:#4b4b4b;letter-spacing:-0.022px;-webkit-text-stroke:0.22px;transform:translate(0.80px,0.63px) rotate(.05deg)">Technical Documentation</div>
<div class="t" id="t43" style="left:505px;top:380px;font-size:10.4px;color:#858585;-webkit-text-stroke:0.22px;transform:translate(0.80px,0.63px) rotate(.05deg)">July 30, 2019 by Em Mcintyre</div>
<div class="t" id="t44" style="left:727px;top:380px;font-size:10.4px;color:#858585;letter-spacing:-0.184px;-webkit-text-stroke:0.22px;transform:translate(0.80px,0.63px) rotate(.05deg)">29 Files</div>
<div class="t" id="t45" style="left:234px;top:420px;font-size:10.4px;color:#4b4b4b;letter-spacing:-0.191px;-webkit-text-stroke:0.22px;transform:translate(0.80px,0.63px) rotate(.05deg)">Social Media</div>
<div class="t" id="t46" style="left:505px;top:420px;font-size:10.4px;color:#858585;letter-spacing:-0.195px;-webkit-text-stroke:0.22px;transform:translate(0.80px,0.63px) rotate(.05deg)">June 21, 2019 by Sarah Yau</div>
<div class="t" id="t47" style="left:727px;top:420px;font-size:10.4px;color:#858585;letter-spacing:0.078px;-webkit-text-stroke:0.22px;transform:translate(0.80px,0.63px) rotate(.05deg)">122 MB</div>
<div class="t" id="t48" style="left:235px;top:460px;font-size:10.4px;color:#4b4b4b;letter-spacing:-0.126px;-webkit-text-stroke:0.22px;transform:translate(0.36px,0.62px) rotate(.05deg)">Video Assets</div>
<div class="t" id="t49" style="left:505px;top:460px;font-size:10.4px;color:#858585;letter-spacing:-0.083px;-webkit-text-stroke:0.22px;transform:translate(0.80px,0.63px) rotate(.05deg)">Today by Will Jordan</div>
<div class="t" id="t50" style="left:727px;top:460px;font-size:10.4px;color:#858585;letter-spacing:-0.184px;-webkit-text-stroke:0.22px;transform:translate(0.80px,0.63px) rotate(.05deg)">21 Files</div>
<div class="t" id="t51" style="left:846px;top:105px;font-size:10.4px;color:#333333;letter-spacing:-0.255px;-webkit-text-stroke:0.47px;transform:translate(0.30px,0.84px) rotate(.05deg)">Sharing</div>
<div class="t" id="t52" style="left:924px;top:105px;font-size:10.4px;color:#8a8a8a;letter-spacing:-0.111px;-webkit-text-stroke:0.22px;transform:translate(0.90px,0.92px) rotate(.05deg)">Details</div>
<div class="t" id="t53" style="left:876px;top:141px;font-size:10.1px;color:#484848;letter-spacing:-0.300px;-webkit-text-stroke:0.22px;transform:translate(0.10px,0.66px) rotate(.05deg) scaleX(0.9837)">Zeke Kelly</div>
<div class="t" id="t54" style="left:876px;top:152px;font-size:9.9px;color:#a0a0a0;letter-spacing:-0.178px;-webkit-text-stroke:0.22px;transform:translate(0.10px,0.98px) rotate(.05deg)">Owner</div>
<div class="t" id="t55" style="left:876px;top:178px;font-size:10.1px;color:#484848;letter-spacing:-0.289px;-webkit-text-stroke:0.22px;transform:translate(0.10px,0.65px) rotate(.05deg)">Janette Heininger</div>
<div class="t" id="t56" style="left:876px;top:189px;font-size:9.9px;color:#a0a0a0;letter-spacing:0.021px;-webkit-text-stroke:0.22px;transform:translate(0.10px,0.97px) rotate(.05deg)">Editor</div>
<div class="t" id="t57" style="left:876px;top:215px;font-size:10.1px;color:#484848;letter-spacing:-0.300px;-webkit-text-stroke:0.22px;transform:translate(0.10px,0.66px) rotate(.05deg) scaleX(0.9582)">Vandana Pai</div>
<div class="t" id="t58" style="left:876px;top:226px;font-size:9.9px;color:#a0a0a0;letter-spacing:-0.023px;-webkit-text-stroke:0.22px;transform:translate(0.10px,0.97px) rotate(.05deg)">Viewer</div>
<div class="t" id="t59" style="left:876px;top:252px;font-size:10.1px;color:#484848;letter-spacing:-0.300px;-webkit-text-stroke:0.22px;transform:translate(0.10px,0.65px) rotate(.05deg)">Ravneet Uberoi</div>
<div class="t" id="t60" style="left:876px;top:263px;font-size:9.9px;color:#a0a0a0;letter-spacing:-0.023px;-webkit-text-stroke:0.22px;transform:translate(0.10px,0.97px) rotate(.05deg)">Viewer</div>
<div class="t" id="t61" style="left:876px;top:289px;font-size:10.1px;color:#484848;letter-spacing:-0.217px;-webkit-text-stroke:0.22px;transform:translate(0.10px,0.64px) rotate(.05deg)">Andrew Dunn</div>
<div class="t" id="t62" style="left:876px;top:300px;font-size:9.9px;color:#a0a0a0;letter-spacing:-0.023px;-webkit-text-stroke:0.22px;transform:translate(0.10px,0.97px) rotate(.05deg)">Viewer</div>
<div class="t" id="t63" style="left:876px;top:332px;font-size:9.9px;color:#5183c2;letter-spacing:-0.228px;-webkit-text-stroke:0.22px;transform:translate(0.10px,0.47px) rotate(.05deg)">+12 People</div>
<div class="t" id="t64" style="left:876px;top:364px;font-size:9.9px;color:#4b4b4b;letter-spacing:-0.300px;-webkit-text-stroke:0.22px;transform:translate(0.10px,0.15px) rotate(.05deg) scaleX(0.9806)">Shared Link</div>
<div class="t" id="t65" style="left:876px;top:375px;font-size:9.9px;color:#a3a3a3;letter-spacing:-0.212px;-webkit-text-stroke:0.22px;transform:translate(0.10px,0.04px) rotate(.05deg)">People in your company</div>
<div class="t" id="t66" style="left:851px;top:256px;font-size:8.6px;color:#ffffff;letter-spacing:0.178px;-webkit-text-stroke:0.41px;transform:translate(0.20px,0.98px) rotate(.05deg)">RU</div>
</div>
<!-- mouse pointer -->
<svg style="left:0;top:0" width="1024" height="576" viewBox="0 0 1024 576">
  <defs><filter id="cs" x="-50%" y="-50%" width="200%" height="200%"><feGaussianBlur stdDeviation="2.2"/></filter></defs>
  <path d="M276.1 151.2 L276.1 179.3 L283.3 176.3 L288.4 183.9 L293.3 182.6 L290.9 173.9 L298.9 169.9 Z" fill="#000" stroke="#000" stroke-width="4.0" stroke-linejoin="round" opacity="0.2" filter="url(#cs)"/>
  <path d="M274.1 148.6 L274.1 176.7 L281.3 173.7 L286.4 181.3 L291.3 180.0 L288.9 171.3 L296.9 167.3 Z" fill="#7b7b7b" stroke="#7b7b7b" stroke-width="4.0" stroke-linejoin="round"/>
  <path d="M274.1 148.6 L274.1 176.7 L281.3 173.7 L286.4 181.3 L291.3 180.0 L288.9 171.3 L296.9 167.3 Z" fill="#fff" stroke="#fff" stroke-width="1.9" stroke-linejoin="round"/>
</svg>

</body>
</html>
